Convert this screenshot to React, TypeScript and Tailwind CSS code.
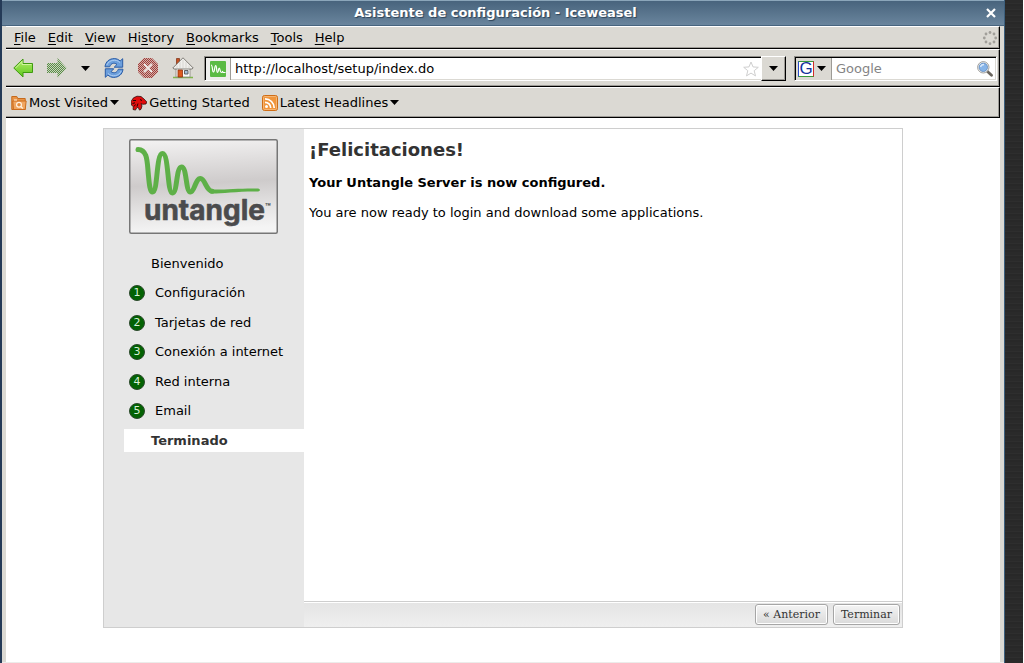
import { clsx } from "clsx";
import type { ReactNode } from "react";

interface MenuItem {
  before?: string;
  accessKey: string;
  after: string;
}

interface Step {
  label: string;
  number?: number;
  active?: boolean;
}

const menuItems: MenuItem[] = [
  { accessKey: "F", after: "ile" },
  { accessKey: "E", after: "dit" },
  { accessKey: "V", after: "iew" },
  { before: "Hi", accessKey: "s", after: "tory" },
  { accessKey: "B", after: "ookmarks" },
  { accessKey: "T", after: "ools" },
  { accessKey: "H", after: "elp" },
];

const steps: Step[] = [
  { label: "Bienvenido" },
  { label: "Configuración", number: 1 },
  { label: "Tarjetas de red", number: 2 },
  { label: "Conexión a internet", number: 3 },
  { label: "Red interna", number: 4 },
  { label: "Email", number: 5 },
  { label: "Terminado", active: true },
];

function Caret() {
  return (
    <svg viewBox="0 0 9 5" className="h-[5px] w-[9px] shrink-0" aria-hidden="true">
      <path d="M0 0h9L4.500 5z" fill="#000" />
    </svg>
  );
}

function BackIcon() {
  return (
    <svg viewBox="0 0 20 20" className="size-5" aria-hidden="true">
      <defs>
        <linearGradient id="back" x1="0" y1="0" x2="0" y2="1">
          <stop offset="0" stopColor="#b6f06a" />
          <stop offset="1" stopColor="#5cc51d" />
        </linearGradient>
      </defs>
      <path
        d="M.8 10 10 1v4.500h9.500v9H10V19z"
        fill="url(#back)"
        stroke="#3f9a10"
        strokeLinejoin="round"
      />
      <path d="M2.500 10 9 3.500v3h9.500" fill="none" stroke="#dcf9b4" strokeWidth=".8" />
    </svg>
  );
}

function ForwardIcon() {
  return (
    <svg viewBox="0 0 20 20" className="size-5" aria-hidden="true">
      <defs>
        <pattern id="forwardDots" width="2" height="2" patternUnits="userSpaceOnUse">
          <rect width="2" height="2" fill="#c8d6bc" />
          <path d="M0 0h1v1H0zM1 1h1v1H1z" fill="#5a8a48" />
        </pattern>
      </defs>
      <path d="M19.500 10 10.500 0v5H0v10h10.500v5z" fill="url(#forwardDots)" />
    </svg>
  );
}

function ReloadIcon() {
  return (
    <svg viewBox="0 0 20 20" className="size-5" aria-hidden="true">
      <g fill="#6c9fdc" stroke="#2a5ca6" strokeWidth="1" strokeLinejoin="round">
        <path d="M1 8.800C1.500 3.500 5.600.6 10.200.6c2.500 0 4.400.9 5.900 2.400L18.700.7v8.500h-8.500l2.800-2.800c-3-2.200-6-1.200-7.300 2.400z" />
        <path d="M19 11.200c-.5 5.300-4.600 8.200-9.200 8.200-2.500 0-4.400-.9-5.900-2.400l-2.600 2.300v-8.500h8.500L7 13.600c3 2.200 6 1.200 7.300-2.400z" />
      </g>
      <path
        d="M2.800 7C5 2 12 .5 16 4.500M17.200 13c-2 5-9 6.500-13.200 2.500"
        fill="none"
        stroke="#b8d4f5"
        strokeWidth=".9"
      />
    </svg>
  );
}

function StopIcon() {
  return (
    <svg viewBox="0 0 20 20" className="size-5" aria-hidden="true">
      <defs>
        <pattern id="stopDots" width="2" height="2" patternUnits="userSpaceOnUse">
          <rect width="2" height="2" fill="#d2b0aa" />
          <path d="M0 0h1v1H0zM1 1h1v1H1z" fill="#a03e3a" />
        </pattern>
      </defs>
      <path d="M6 0h8l6 6v8l-6 6H6l-6-6V6z" fill="url(#stopDots)" />
      <path d="m6 6 8 8m0-8-8 8" stroke="#efe9e6" strokeWidth="1.800" />
    </svg>
  );
}

function HomeIcon() {
  return (
    <svg viewBox="0 0 22 22" className="size-[22px]" aria-hidden="true">
      <path d="M1 20.500h20" stroke="#7fb54d" strokeWidth="1.500" />
      <path d="M4.500 1.500h3v6h-3z" fill="#c4501f" stroke="#7a2c12" strokeWidth=".7" />
      <path d="M4 11 11 4l7 7v9H4z" fill="#fbfaf8" stroke="#8a8680" strokeWidth=".8" />
      <path
        d="M11 .8.8 11l1.200 1h18l1.200-1z"
        fill="#efeeeb"
        stroke="#66625c"
        strokeWidth=".8"
      />
      <path d="M8 5v6M11 3v8M14 5v6M5 8.500V11M17 8.500V11" stroke="#d2cfca" strokeWidth=".8" />
      <path d="M6 13h4.500v7H6z" fill="#dc5a1e" stroke="#933410" strokeWidth=".8" />
      <path d="M12.500 13.500H16V17h-3.500z" fill="#a9c0da" stroke="#555" strokeWidth=".9" />
    </svg>
  );
}

function SiteIcon() {
  return (
    <svg viewBox="0 0 16 16" className="size-4" aria-hidden="true">
      <rect width="16" height="16" rx="1" fill="#5bbb45" />
      <path
        d="M1 4c2 0 1 7 2.400 7S4.500 4.500 5.700 4.500 6.300 11.500 7.500 11.500 8.200 7 9.200 7s.8 4.500 2 4.500S12.500 9 13 11.500h2.500"
        fill="none"
        stroke="#fff"
        strokeWidth="1.200"
      />
    </svg>
  );
}

function StarIcon() {
  return (
    <svg viewBox="0 0 16 16" className="size-4" aria-hidden="true">
      <path
        d="m8 1 2 4.900 5.300.4-4.100 3.400 1.300 5.200L8 12.100l-4.500 2.800 1.300-5.200L.7 6.300 6 5.900z"
        fill="#fff"
        stroke="#cfcfcf"
        strokeLinejoin="round"
      />
    </svg>
  );
}

function SearchIcon() {
  return (
    <svg viewBox="0 0 16 16" className="size-4" aria-hidden="true">
      <path d="m10.500 10.500 4 3.800" stroke="#6b665f" strokeWidth="2.800" strokeLinecap="round" />
      <circle cx="6.300" cy="6.300" r="5.700" fill="#f2f2f0" stroke="#8a8a88" strokeWidth=".8" />
      <circle cx="6.300" cy="6.300" r="4.200" fill="#86b4e8" stroke="#5c86bc" strokeWidth=".8" />
      <path d="M3.500 6c.5-2 2-2.500 3.500-2.500" fill="none" stroke="#d9e9fb" strokeWidth="1.300" />
    </svg>
  );
}

function FolderIcon() {
  return (
    <svg viewBox="0 0 16 16" className="size-4" aria-hidden="true">
      <path
        d="M.8 14.500V1.500h5l1 2h7.400v11z"
        fill="#e99446"
        stroke="#c66a1c"
        strokeWidth="1"
      />
      <path d="M2.500 14.500 1.800 6h13.400l-1 8.500z" fill="#f0a763" stroke="#c9691a" strokeWidth=".9" />
      <circle cx="8" cy="9.700" r="2.400" fill="#e58b3b" stroke="#fff3e4" strokeWidth="1.200" />
      <path d="m9.800 11.500 2 2M3 5h3" stroke="#fff3e4" strokeWidth="1.200" />
    </svg>
  );
}

function WeaselIcon() {
  return (
    <svg viewBox="0 0 16 16" className="size-4" aria-hidden="true">
      <path
        d="M0 6.500 2.500 2.800 6 1.200 10 1.500 13 4l2.800 3-.8 2-3.300.3-1.700-.8 1 2.500-1 3.300-1.500.8-1.500-3-1.500 1-1 2-2.500-.6.300-2.700L.5 10z"
        fill="#e00d0d"
        stroke="#1c0202"
        strokeWidth=".7"
      />
      <path
        d="M2 5.500h3M1.500 8.500 4 7.800M3 11.500l1.500-2M9 4.500l2 1M7 8.500l-1 3"
        stroke="#250303"
        strokeWidth="1"
      />
    </svg>
  );
}

function FeedIcon() {
  return (
    <svg viewBox="0 0 16 16" className="size-4" aria-hidden="true">
      <rect x=".5" y=".5" width="15" height="15" rx="2" fill="#f0963c" stroke="#cf6d16" />
      <rect x="1.500" y="1.500" width="13" height="13" rx="1" fill="none" stroke="#f8bd80" strokeWidth=".8" />
      <circle cx="4.500" cy="11.500" r="1.500" fill="#fff" />
      <path
        d="M3 7.300A5.700 5.700 0 0 1 8.700 13M3 3.800A9.200 9.200 0 0 1 12.200 13"
        fill="none"
        stroke="#fff"
        strokeWidth="1.700"
      />
    </svg>
  );
}

function Throbber() {
  return (
    <svg viewBox="0 0 16 16" className="size-4" aria-hidden="true">
      <g fill="#a19f9a">
        <circle cx="8" cy="2.500" r="1.400" />
        <circle cx="12" cy="4" r="1.400" />
        <circle cx="13.700" cy="8" r="1.400" />
        <circle cx="12" cy="12" r="1.400" />
        <circle cx="8" cy="13.700" r="1.400" />
        <circle cx="4" cy="12" r="1.400" />
        <circle cx="2.300" cy="8" r="1.400" />
        <circle cx="4" cy="4" r="1.400" />
      </g>
    </svg>
  );
}

function UntangleLogo() {
  return (
    <svg viewBox="0 0 149 95" className="h-[95px] w-[149px]" role="img" aria-label="untangle">
      <defs>
        <linearGradient id="plate" x1="0" y1="0" x2=".08" y2="1">
          <stop offset="0" stopColor="#f4f3f3" />
          <stop offset=".5" stopColor="#cecbcb" />
          <stop offset=".8" stopColor="#e6e5e5" />
          <stop offset="1" stopColor="#f4f4f4" />
        </linearGradient>
      </defs>
      <rect x=".75" y=".75" width="147.500" height="93.500" rx="1.500" fill="url(#plate)" stroke="#767676" strokeWidth="1.500" />
      <path
        d="M9 10.500C19 11 18 23 19.500 37c.8 9 1.700 16 4 16 5.500 0 3.500-38.500 10-38.500S38 54 43.500 54c5 0 3.500-26 9-26s4 25 9 25c4 0 5-13.500 10-13.500 4.500 0 5.500 12 11.500 12.800"
        fill="none"
        stroke="#5eb048"
        strokeWidth="5"
        strokeLinecap="round"
      />
      <path
        d="M80 49.800c5 2.200 28-.8 49-.3 2.500.1 2.500 3 0 3-20-.5-44 3-48 1.800z"
        fill="#5eb048"
      />
      <text
        x="15"
        y="81"
        fill="#4b4b4d"
        stroke="#4b4b4d"
        strokeWidth=".6"
        strokeLinejoin="round"
        className="font-['Inter',sans-serif] text-[28px] font-bold"
      >
        untangle
      </text>
      <text
        x="136"
        y="71"
        fill="#4b4b4d"
        className="font-['Inter',sans-serif] text-[9px] font-bold"
      >
        ™
      </text>
    </svg>
  );
}

function Toolbar({ className, children }: { className?: string; children: ReactNode }) {
  return (
    <div
      className={clsx(
        "flex items-center border-t border-r border-b border-t-white border-r-black border-b-black shadow-[inset_-1px_-1px_0_#9d9b96]",
        className
      )}
    >
      {children}
    </div>
  );
}

function TitleBar() {
  return (
    <header className="flex h-[26px] items-center border-t border-b border-t-[#8ba6ba] border-b-[#48657f] bg-linear-to-b from-[#48647d] to-[#6a859d] pr-[7px] pl-1 text-white">
      <h1 className="flex-1 text-center text-[13px] font-bold [text-shadow:1px_1px_1px_#2c4257]">
        Asistente de configuración - Iceweasel
      </h1>
      <button type="button" aria-label="Close" className="flex size-3 items-center justify-center">
        <svg viewBox="0 0 10 10" className="size-[10px]" aria-hidden="true">
          <path d="m1 1 8 8m0-8-8 8" stroke="#fff" strokeWidth="2.200" />
        </svg>
      </button>
    </header>
  );
}

function MenuBar() {
  return (
    <Toolbar className="h-[23px] justify-between pr-px pl-0.5">
      <nav className="flex">
        {menuItems.map(({ before, accessKey, after }) => (
          <button key={after} type="button" className="px-1.5">
            {before}
            <span className="underline underline-offset-2">{accessKey}</span>
            {after}
          </button>
        ))}
      </nav>
      <Throbber />
    </Toolbar>
  );
}

function NavigationBar() {
  return (
    <Toolbar className="h-[38px] pr-0.5 pl-[7px]">
      <div className="flex items-center gap-[14px]">
        <button type="button" aria-label="Back">
          <BackIcon />
        </button>
        <button type="button" aria-label="Forward">
          <ForwardIcon />
        </button>
        <button type="button" aria-label="Recent pages">
          <Caret />
        </button>
        <button type="button" aria-label="Reload">
          <ReloadIcon />
        </button>
        <button type="button" aria-label="Stop">
          <StopIcon />
        </button>
        <button type="button" aria-label="Home">
          <HomeIcon />
        </button>
      </div>
      <div className="ml-[10px] flex h-[25px] flex-1 items-stretch">
        <div className="flex flex-1 items-center border-t border-b border-l border-t-[#8f8d88] border-b-white border-l-[#8f8d88] bg-white pt-px pl-px shadow-[inset_1px_1px_0_#000,inset_0_-1px_0_#dbd9d3]">
          <span className="flex items-center self-stretch border-r border-[#9d9b96] bg-[#eeeeec] px-1">
            <SiteIcon />
          </span>
          <input
            type="text"
            aria-label="Location"
            defaultValue="http://localhost/setup/index.do"
            className="min-w-0 flex-1 bg-transparent px-1 outline-none"
          />
          <button type="button" aria-label="Bookmark this page" className="mr-0.5">
            <StarIcon />
          </button>
        </div>
        <button
          type="button"
          aria-label="Show history"
          className="flex w-[25px] items-center justify-center border border-t-white border-r-black border-b-black border-l-white shadow-[inset_-1px_-1px_0_#9d9b96]"
        >
          <Caret />
        </button>
      </div>
      <div className="ml-2 flex h-[25px] w-[203px] items-center border border-t-[#8f8d88] border-r-white border-b-white border-l-[#8f8d88] bg-white pt-px pr-[3px] pl-px shadow-[inset_1px_1px_0_#000,inset_-1px_-1px_0_#dbd9d3]">
        <button
          type="button"
          aria-label="Choose search engine"
          className="flex items-center gap-[3px] self-stretch border-r border-[#9d9b96] bg-[#dbd9d3] pr-[5px] pl-0.5"
        >
          <span className="flex size-4 items-center justify-center border border-t-[#3a9a3a] border-r-[#d22a2a] border-b-[#3a9a3a] border-l-[#2a4ecb] bg-white font-['Liberation_Sans',sans-serif] text-[17px] leading-none text-[#12309c]">
            G
          </span>
          <Caret />
        </button>
        <input
          type="text"
          aria-label="Search"
          placeholder="Google"
          className="min-w-0 flex-1 bg-transparent px-1 outline-none placeholder:text-[#848484]"
        />
        <button type="button" aria-label="Search the web">
          <SearchIcon />
        </button>
      </div>
    </Toolbar>
  );
}

function BookmarksBar() {
  return (
    <Toolbar className="h-[31px] gap-3 pl-[5px]">
      <button type="button" className="flex items-center gap-0.5">
        <FolderIcon />
        Most Visited
        <Caret />
      </button>
      <a href="#getting-started" className="flex items-center gap-0.5">
        <WeaselIcon />
        Getting Started
      </a>
      <button type="button" className="flex items-center gap-0.5">
        <FeedIcon />
        Latest Headlines
        <Caret />
      </button>
    </Toolbar>
  );
}

function Sidebar() {
  return (
    <aside className="w-[200px] shrink-0 bg-[#e7e7e7] pt-[10px] pl-5">
      <div className="pl-[5px]">
        <UntangleLogo />
      </div>
      <ol className="mt-[18px] flex h-[200px] flex-col justify-between">
        {steps.map(({ label, number, active }) => (
          <li
            key={label}
            className={clsx(
              "flex h-[23px] items-center",
              active && "bg-white font-bold text-[#333]",
              number ? "gap-[10px] pl-[5px]" : "pl-[27px]"
            )}
          >
            {number && (
              <span className="flex size-4 items-center justify-center rounded-full border border-[#2c4a2c] bg-[#036203] text-[11px] text-[#d8f0d8]">
                {number}
              </span>
            )}
            {label}
          </li>
        ))}
      </ol>
    </aside>
  );
}

function WizardButton({ children }: { children: ReactNode }) {
  return (
    <button
      type="button"
      className="h-[21px] rounded-[3px] border border-[#a6a6a6] bg-linear-to-b from-[#f4f4f4] to-[#dadada] px-[7px] font-['DejaVu_Serif',serif] text-[11px] text-[#333] shadow-[inset_0_0_0_1px_#fff]"
    >
      {children}
    </button>
  );
}

function Wizard() {
  return (
    <main className="mx-auto flex min-h-[500px] w-full max-w-[800px] border border-[#cecece]">
      <Sidebar />
      <div className="flex flex-1 flex-col">
        <section className="flex-1 px-[5px] pt-2">
          <h2 className="text-[18px] leading-[26px] font-bold text-[#333]">¡Felicitaciones!</h2>
          <p className="mt-3 leading-4 font-bold">Your Untangle Server is now configured.</p>
          <p className="mt-[14px] leading-4">
            You are now ready to login and download some applications.
          </p>
        </section>
        <footer className="flex h-[26px] items-center justify-end gap-[5px] border-t border-[#cecece] bg-linear-to-b from-[#e4e4e4] to-[#efefef] pr-0.5 shadow-[inset_0_1px_0_#fff]">
          <WizardButton>« Anterior</WizardButton>
          <WizardButton>Terminar</WizardButton>
        </footer>
      </div>
    </main>
  );
}

export default function App() {
  return (
    <div className="flex min-h-screen bg-white font-['DejaVu_Sans',sans-serif] text-[13px] leading-4 text-black">
      <div className="flex flex-1 flex-col border-r border-l-2 border-r-[#3c5f7d] border-l-[#243a57]">
        <TitleBar />
        <div className="flex flex-1 flex-col border-b border-[#ececea] bg-[#dbd9d3] pr-1 pl-1">
          <MenuBar />
          <NavigationBar />
          <BookmarksBar />
          <div className="flex-1 bg-white pt-[10px]">
            <Wizard />
          </div>
        </div>
      </div>
      <div className="mr-px w-[18px] bg-[repeating-linear-gradient(#2a2a2a_0_3px,#2e2e2e_3px_4px,#282828_4px_6px)]" />
    </div>
  );
}
